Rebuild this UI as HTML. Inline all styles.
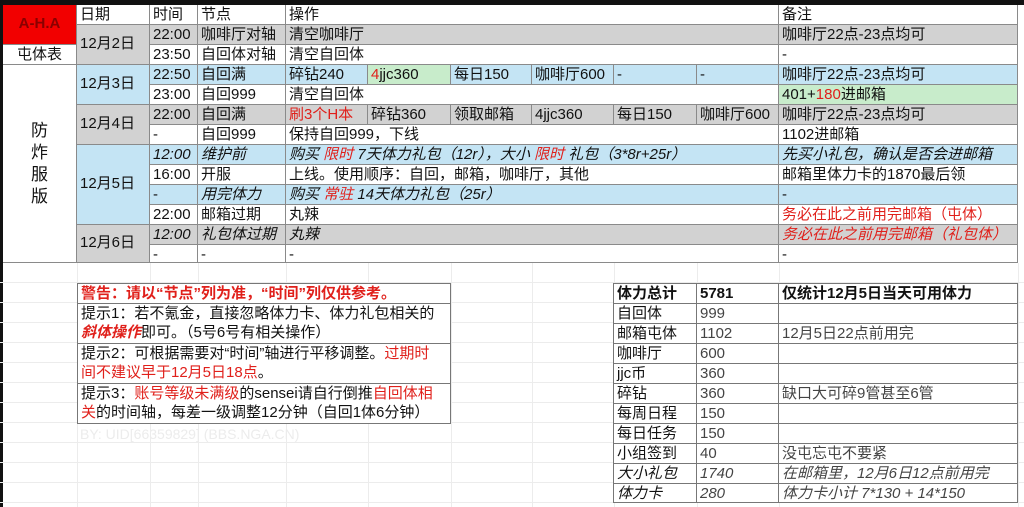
<!DOCTYPE html>
<html><head><meta charset="utf-8"><style>
body{margin:0;width:1024px;height:507px;overflow:hidden;background:#fff;position:relative;font-family:"Liberation Sans","Noto Sans CJK SC",sans-serif;font-size:15px;color:#111}
.c{position:absolute;box-sizing:border-box;border-right:1px solid #8a8a8a;border-bottom:1px solid #8a8a8a;line-height:19px;padding-left:3px;white-space:nowrap;overflow:hidden}
.g{background:#d2d2d2}.b{background:#c4e4f4}.gr{background:#c8eccb}.w{background:#fff}
.r{color:#e0201b}.i{font-style:italic}.bd{font-weight:bold}
.grid{position:absolute;left:0;top:263px;width:1024px;height:244px;background-image:repeating-linear-gradient(to bottom,transparent 0 19px,#ececec 19px 20px),linear-gradient(to right,transparent 77px,#ececec 77px 78px,transparent 78px 150px,#ececec 150px 151px,transparent 151px 198px,#ececec 198px 199px,transparent 199px 286px,#ececec 286px 287px,transparent 287px 368px,#ececec 368px 369px,transparent 369px 451px,#ececec 451px 452px,transparent 452px 532px,#ececec 532px 533px,transparent 533px 614px,#ececec 614px 615px,transparent 615px 697px,#ececec 697px 698px,transparent 698px 779px,#ececec 779px 780px,transparent 780px 1018px,#ececec 1018px 1019px,transparent 1019px)}
.t{position:absolute;box-sizing:border-box;border:1px solid #777;border-top:none;line-height:20px;padding-left:3px;white-space:nowrap;background:#fff}
.t2{position:absolute;box-sizing:border-box;border-right:1px solid #777;border-bottom:1px solid #777;line-height:19px;padding-left:3px;white-space:nowrap;background:#fff}
</style></head><body>
<div style="position:absolute;left:0;top:0;width:1024px;height:5px;background:#111"></div>
<div style="position:absolute;left:0;top:0;width:3px;height:507px;background:#111"></div>
<div class="grid"></div>

<div class="c" style="left:3px;top:5px;width:74px;height:40px;background:#f20000;color:#8a0000;font-weight:bold;text-align:center;line-height:38px;padding:0">A-H.A</div>
<div class="c w" style="left:3px;top:45px;width:74px;height:20px;text-align:center;padding:0">屯体表</div>
<div class="c w" style="left:3px;top:65px;width:74px;height:198px;text-align:center;padding:55px 0 0;line-height:22px;font-size:17px;white-space:normal">防<br>炸<br>服<br>版</div>

<div class="c w" style="left:77px;top:5px;width:73px;height:20px">日期</div>
<div class="c w" style="left:150px;top:5px;width:48px;height:20px">时间</div>
<div class="c w" style="left:198px;top:5px;width:88px;height:20px">节点</div>
<div class="c w" style="left:286px;top:5px;width:493px;height:20px">操作</div>
<div class="c w" style="left:779px;top:5px;width:239px;height:20px">备注</div>

<div class="c g" style="left:77px;top:25px;width:73px;height:40px;line-height:38px">12月2日</div>
<div class="c b" style="left:77px;top:65px;width:73px;height:40px;line-height:38px">12月3日</div>
<div class="c g" style="left:77px;top:105px;width:73px;height:40px;line-height:38px">12月4日</div>
<div class="c b" style="left:77px;top:145px;width:73px;height:80px;line-height:78px">12月5日</div>
<div class="c g" style="left:77px;top:225px;width:73px;height:38px;line-height:36px">12月6日</div>

<div class="c g" style="left:150px;top:25px;width:48px;height:20px">22:00</div>
<div class="c g" style="left:198px;top:25px;width:88px;height:20px">咖啡厅对轴</div>
<div class="c g" style="left:286px;top:25px;width:493px;height:20px">清空咖啡厅</div>
<div class="c g" style="left:779px;top:25px;width:239px;height:20px">咖啡厅22点-23点均可</div>
<div class="c w" style="left:150px;top:45px;width:48px;height:20px">23:50</div>
<div class="c w" style="left:198px;top:45px;width:88px;height:20px">自回体对轴</div>
<div class="c w" style="left:286px;top:45px;width:493px;height:20px">清空自回体</div>
<div class="c w" style="left:779px;top:45px;width:239px;height:20px">-</div>

<div class="c b" style="left:150px;top:65px;width:48px;height:20px">22:50</div>
<div class="c b" style="left:198px;top:65px;width:88px;height:20px">自回满</div>
<div class="c b" style="left:286px;top:65px;width:82px;height:20px">碎钻240</div>
<div class="c gr" style="left:368px;top:65px;width:83px;height:20px"><span class="r">4</span>jjc360</div>
<div class="c b" style="left:451px;top:65px;width:81px;height:20px">每日150</div>
<div class="c b" style="left:532px;top:65px;width:82px;height:20px">咖啡厅600</div>
<div class="c b" style="left:614px;top:65px;width:83px;height:20px">-</div>
<div class="c b" style="left:697px;top:65px;width:82px;height:20px">-</div>
<div class="c b" style="left:779px;top:65px;width:239px;height:20px">咖啡厅22点-23点均可</div>
<div class="c w" style="left:150px;top:85px;width:48px;height:20px">23:00</div>
<div class="c w" style="left:198px;top:85px;width:88px;height:20px">自回999</div>
<div class="c w" style="left:286px;top:85px;width:493px;height:20px">清空自回体</div>
<div class="c gr" style="left:779px;top:85px;width:239px;height:20px">401+<span class="r">180</span>进邮箱</div>

<div class="c g" style="left:150px;top:105px;width:48px;height:20px">22:00</div>
<div class="c g" style="left:198px;top:105px;width:88px;height:20px">自回满</div>
<div class="c g r" style="left:286px;top:105px;width:82px;height:20px">刷3个H本</div>
<div class="c g" style="left:368px;top:105px;width:83px;height:20px">碎钻360</div>
<div class="c g" style="left:451px;top:105px;width:81px;height:20px">领取邮箱</div>
<div class="c g" style="left:532px;top:105px;width:82px;height:20px">4jjc360</div>
<div class="c g" style="left:614px;top:105px;width:83px;height:20px">每日150</div>
<div class="c g" style="left:697px;top:105px;width:82px;height:20px">咖啡厅600</div>
<div class="c g" style="left:779px;top:105px;width:239px;height:20px">咖啡厅22点-23点均可</div>
<div class="c w" style="left:150px;top:125px;width:48px;height:20px">-</div>
<div class="c w" style="left:198px;top:125px;width:88px;height:20px">自回999</div>
<div class="c w" style="left:286px;top:125px;width:493px;height:20px">保持自回999，下线</div>
<div class="c w" style="left:779px;top:125px;width:239px;height:20px">1102进邮箱</div>

<div class="c b i" style="left:150px;top:145px;width:48px;height:20px">12:00</div>
<div class="c b i" style="left:198px;top:145px;width:88px;height:20px">维护前</div>
<div class="c b i" style="left:286px;top:145px;width:493px;height:20px">购买 <span class="r">限时</span> 7天体力礼包（12r），大小 <span class="r">限时</span> 礼包（3*8r+25r）</div>
<div class="c b i" style="left:779px;top:145px;width:239px;height:20px">先买小礼包，确认是否会进邮箱</div>
<div class="c w" style="left:150px;top:165px;width:48px;height:20px">16:00</div>
<div class="c w" style="left:198px;top:165px;width:88px;height:20px">开服</div>
<div class="c w" style="left:286px;top:165px;width:493px;height:20px">上线。使用顺序：自回，邮箱，咖啡厅，其他</div>
<div class="c w" style="left:779px;top:165px;width:239px;height:20px">邮箱里体力卡的1870最后领</div>
<div class="c b" style="left:150px;top:185px;width:48px;height:20px">-</div>
<div class="c b i" style="left:198px;top:185px;width:88px;height:20px">用完体力</div>
<div class="c b i" style="left:286px;top:185px;width:493px;height:20px">购买 <span class="r">常驻</span> 14天体力礼包（25r）</div>
<div class="c b" style="left:779px;top:185px;width:239px;height:20px">-</div>
<div class="c w" style="left:150px;top:205px;width:48px;height:20px">22:00</div>
<div class="c w" style="left:198px;top:205px;width:88px;height:20px">邮箱过期</div>
<div class="c w" style="left:286px;top:205px;width:493px;height:20px">丸辣</div>
<div class="c w r" style="left:779px;top:205px;width:239px;height:20px">务必在此之前用完邮箱（屯体）</div>

<div class="c g i" style="left:150px;top:225px;width:48px;height:20px">12:00</div>
<div class="c g i" style="left:198px;top:225px;width:88px;height:20px">礼包体过期</div>
<div class="c g i" style="left:286px;top:225px;width:493px;height:20px">丸辣</div>
<div class="c g i r" style="left:779px;top:225px;width:239px;height:20px">务必在此之前用完邮箱（礼包体）</div>
<div class="c w" style="left:150px;top:245px;width:48px;height:18px">-</div>
<div class="c w" style="left:198px;top:245px;width:88px;height:18px">-</div>
<div class="c w" style="left:286px;top:245px;width:493px;height:18px">-</div>
<div class="c w" style="left:779px;top:245px;width:239px;height:18px">-</div>

<div class="t r bd" style="left:77px;top:283px;width:374px;height:21px;border-top:1px solid #777">警告：请以“节点”列为准，“时间”列仅供参考。</div>
<div class="t" style="left:77px;top:304px;width:374px;height:40px;white-space:normal;line-height:19px">提示1：若不氪金，直接忽略体力卡、体力礼包相关的<br><span class="r i bd">斜体操作</span>即可。（5号6号有相关操作）</div>
<div class="t" style="left:77px;top:344px;width:374px;height:40px;white-space:normal;line-height:19px">提示2：可根据需要对“时间”轴进行平移调整。<span class="r">过期时<br>间不建议早于12月5日18点</span>。</div>
<div class="t" style="left:77px;top:384px;width:374px;height:40px;white-space:normal;line-height:19px">提示3：<span class="r">账号等级未满级</span>的sensei请自行倒推<span class="r">自回体相<br>关</span>的时间轴，每差一级调整12分钟（自回1体6分钟）</div>
<div style="position:absolute;left:80px;top:426px;color:#ececec;font-size:14px">BY: UID[66359829] (BBS.NGA.CN)</div>

<div style="position:absolute;left:614px;top:283px;width:404px;height:1px;background:#777"></div>
<div style="position:absolute;left:613px;top:283px;width:1px;height:220px;background:#777"></div>
<div class="t2 bd" style="left:614px;top:284px;width:83px;height:20px">体力总计</div>
<div class="t2 bd" style="left:697px;top:284px;width:82px;height:20px">5781</div>
<div class="t2 bd" style="left:779px;top:284px;width:239px;height:20px">仅统计12月5日当天可用体力</div>

<div class="t2" style="left:614px;top:304px;width:83px;height:20px">自回体</div>
<div class="t2" style="left:697px;top:304px;width:82px;height:20px;color:#444">999</div>
<div class="t2" style="left:779px;top:304px;width:239px;height:20px"></div>
<div class="t2" style="left:614px;top:324px;width:83px;height:20px">邮箱屯体</div>
<div class="t2" style="left:697px;top:324px;width:82px;height:20px;color:#444">1102</div>
<div class="t2" style="left:779px;top:324px;width:239px;height:20px;color:#444">12月5日22点前用完</div>
<div class="t2" style="left:614px;top:344px;width:83px;height:20px">咖啡厅</div>
<div class="t2" style="left:697px;top:344px;width:82px;height:20px;color:#444">600</div>
<div class="t2" style="left:779px;top:344px;width:239px;height:20px"></div>
<div class="t2" style="left:614px;top:364px;width:83px;height:20px">jjc币</div>
<div class="t2" style="left:697px;top:364px;width:82px;height:20px;color:#444">360</div>
<div class="t2" style="left:779px;top:364px;width:239px;height:20px"></div>
<div class="t2" style="left:614px;top:384px;width:83px;height:20px">碎钻</div>
<div class="t2" style="left:697px;top:384px;width:82px;height:20px;color:#444">360</div>
<div class="t2" style="left:779px;top:384px;width:239px;height:20px;color:#444">缺口大可碎9管甚至6管</div>
<div class="t2" style="left:614px;top:404px;width:83px;height:20px">每周日程</div>
<div class="t2" style="left:697px;top:404px;width:82px;height:20px;color:#444">150</div>
<div class="t2" style="left:779px;top:404px;width:239px;height:20px"></div>
<div class="t2" style="left:614px;top:424px;width:83px;height:20px">每日任务</div>
<div class="t2" style="left:697px;top:424px;width:82px;height:20px;color:#444">150</div>
<div class="t2" style="left:779px;top:424px;width:239px;height:20px"></div>
<div class="t2" style="left:614px;top:444px;width:83px;height:20px">小组签到</div>
<div class="t2" style="left:697px;top:444px;width:82px;height:20px;color:#444">40</div>
<div class="t2" style="left:779px;top:444px;width:239px;height:20px;color:#444">没屯忘屯不要紧</div>
<div class="t2 i" style="left:614px;top:464px;width:83px;height:20px">大小礼包</div>
<div class="t2 i" style="left:697px;top:464px;width:82px;height:20px;color:#444">1740</div>
<div class="t2 i" style="left:779px;top:464px;width:239px;height:20px;color:#444">在邮箱里，12月6日12点前用完</div>
<div class="t2 i" style="left:614px;top:484px;width:83px;height:19px">体力卡</div>
<div class="t2 i" style="left:697px;top:484px;width:82px;height:19px;color:#444">280</div>
<div class="t2 i" style="left:779px;top:484px;width:239px;height:19px;color:#444">体力卡小计 7*130 + 14*150</div>
</body></html>
